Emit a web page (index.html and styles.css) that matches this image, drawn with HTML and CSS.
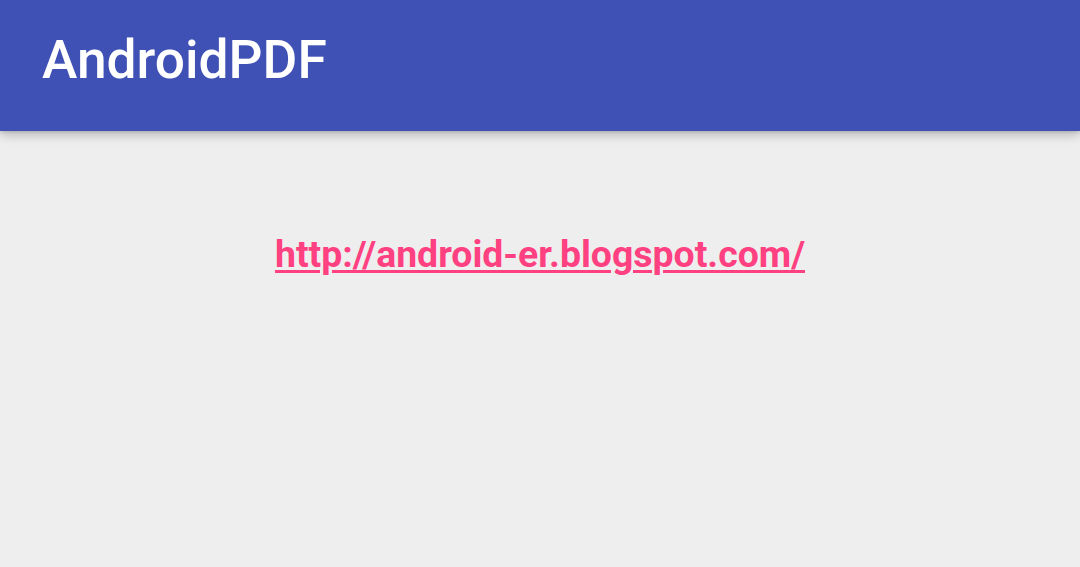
FILE: index.html
```html
<!DOCTYPE html>
<html>
<head>
<meta charset="utf-8">
<link rel="stylesheet" href="styles.css">
</head>
<body>
<header class="appbar">
  <h1 class="title">AndroidPDF</h1>
</header>
<main class="content">
  <a class="link" href="#">http://android-er.blogspot.com/</a>
</main>
</body>
</html>
```
FILE: styles.css
```css
html, body {
  margin: 0;
  padding: 0;
  width: 1080px;
  height: 567px;
  overflow: hidden;
  background: #eeeeee;
  font-family: Roboto, "Noto Sans", sans-serif;
}
.appbar {
  height: 131px;
  box-sizing: border-box;
  background: #3f51b5;
  box-shadow: 0 4px 10px rgba(0, 0, 0, 0.22), 0 1px 3px rgba(0, 0, 0, 0.12);
  display: flex;
  align-items: flex-start;
  padding-left: 42px;
  padding-top: 34px;
  position: relative;
  z-index: 1;
}
.title {
  margin: 0;
  color: #ffffff;
  font-size: 53.3px;
  font-weight: 500;
  line-height: 1;
  letter-spacing: 0;
}
.content {
  display: flex;
  justify-content: center;
  padding-top: 105px;
}
.link {
  color: #ff4081;
  font-size: 37.4px;
  font-weight: 700;
  text-decoration: underline;
  text-decoration-thickness: 3px;
  text-underline-offset: 3px;
  line-height: 1;
}
```
